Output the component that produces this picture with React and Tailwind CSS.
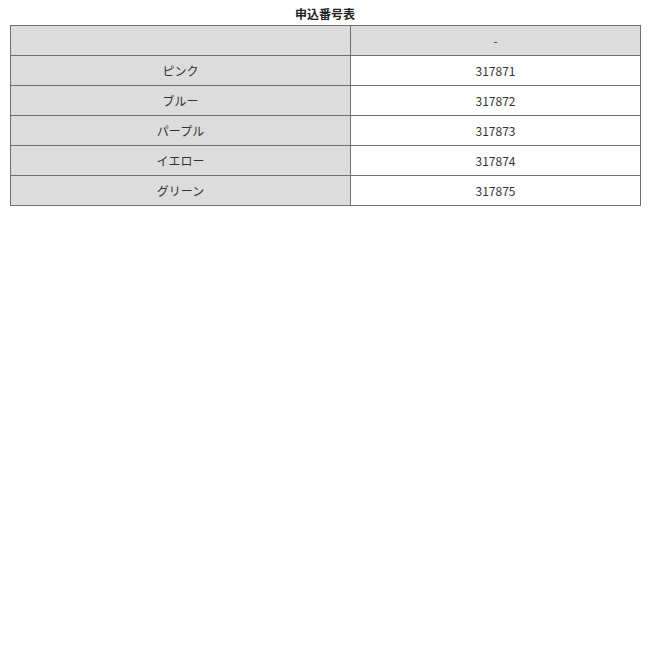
export default function App() {
  const rows = [
    { name: 'ピンク', no: '317871' },
    { name: 'ブルー', no: '317872' },
    { name: 'パープル', no: '317873' },
    { name: 'イエロー', no: '317874' },
    { name: 'グリーン', no: '317875' },
  ]

  return (
    <div className="px-[10px] pt-[5px] text-[12px] text-[#333]" style={{ fontFamily: '"Noto Sans CJK JP", sans-serif' }}>
      <p className="text-center font-bold text-[12px] leading-[18px] h-[20px] text-[#222]">申込番号表</p>
      <table className="w-[630px] border-collapse table-fixed">
        <colgroup>
          <col className="w-[340px]" />
          <col className="w-[290px]" />
        </colgroup>
        <tbody>
          <tr className="h-[30px]">
            <th className="border border-[#707070] bg-[#dcdcdc] font-normal"></th>
            <th className="border border-[#707070] bg-[#dcdcdc] font-normal text-center">-</th>
          </tr>
          {rows.map(r => (
            <tr key={r.no} className="h-[30px]">
              <th className="border border-[#707070] bg-[#dcdcdc] font-normal text-center">{r.name}</th>
              <td className="border border-[#707070] bg-white text-center">{r.no}</td>
            </tr>
          ))}
        </tbody>
      </table>
    </div>
  )
}
